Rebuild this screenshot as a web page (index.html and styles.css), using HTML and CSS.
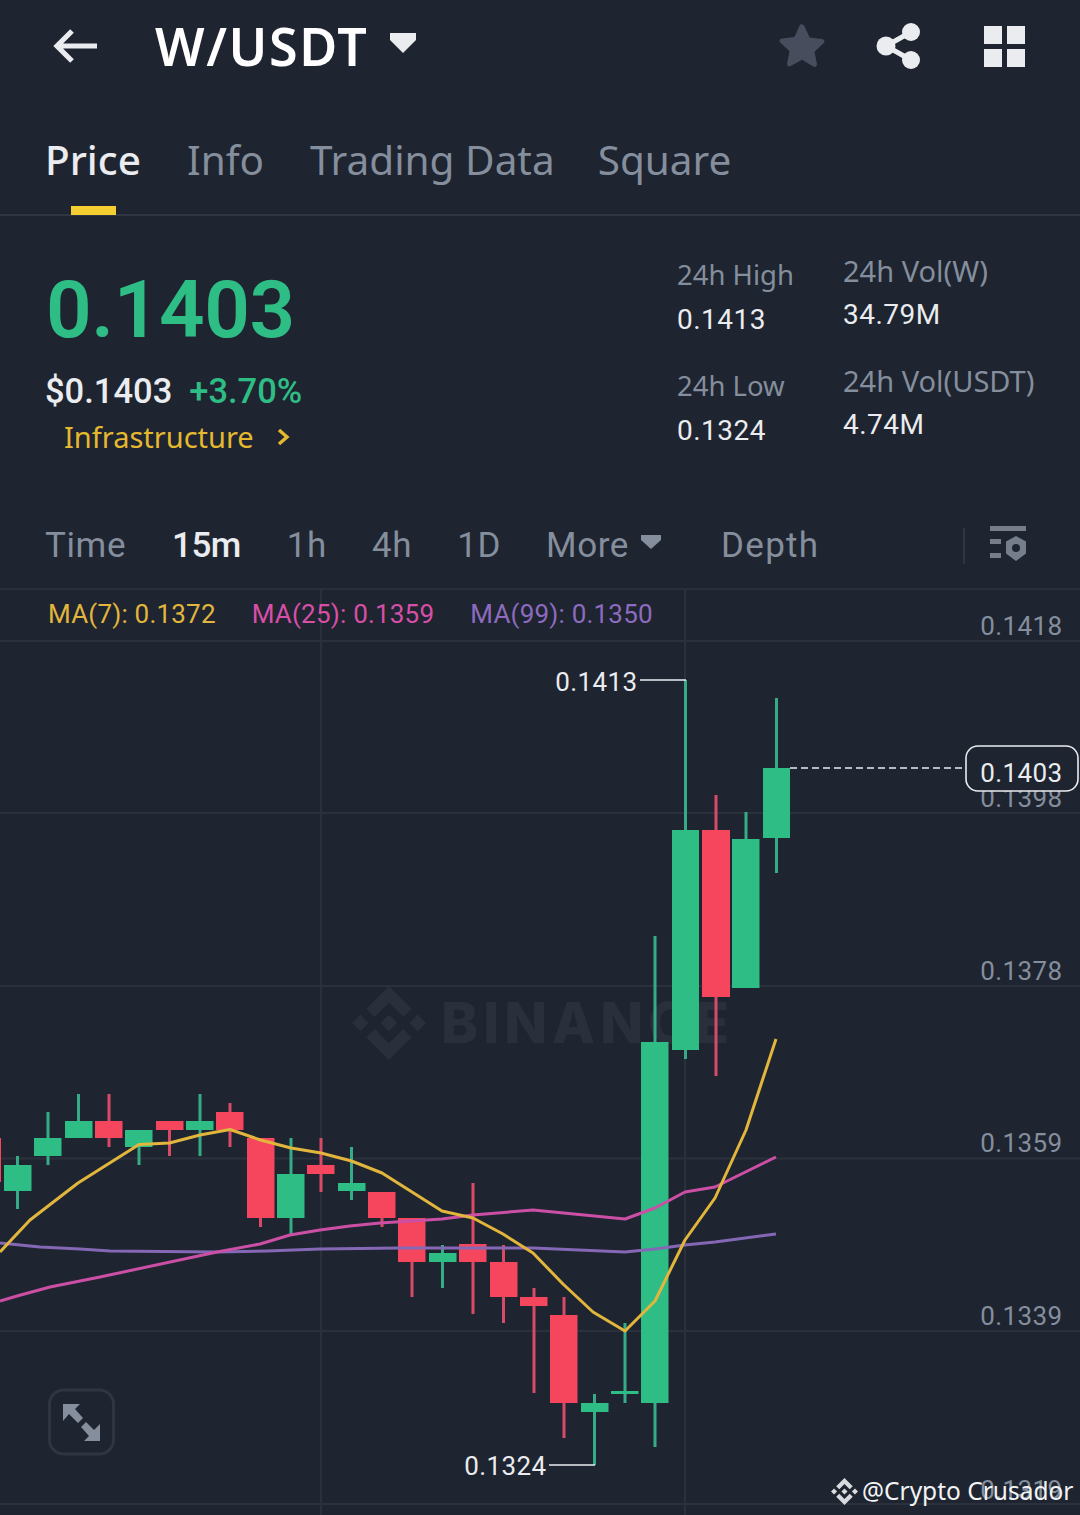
FILE: index.html
```html
<!DOCTYPE html>
<html lang="en">
<head>
<meta charset="utf-8">
<title>W/USDT</title>
<link rel="stylesheet" href="styles.css">
</head>
<body>
<svg class="defs" width="0" height="0"><defs>
<symbol id="bnb" viewBox="0 0 24 24"><path d="M16.624 13.9202l2.7175 2.7154-7.353 7.353-7.353-7.352 2.7175-2.7164 4.6355 4.6595 4.6356-4.6595zm4.6366-4.6366L24 12l-2.7154 2.7164L18.5682 12l2.6924-2.7164zm-9.272.001l2.7163 2.6914-2.7164 2.7174v-.001L9.2721 12l2.7164-2.7154zm-9.2722-.001L5.4088 12l-2.6914 2.6924L0 12l2.7164-2.7164zM11.9885.0115l7.353 7.329-2.7174 2.7154-4.6356-4.6356-4.6355 4.6595-2.7174-2.7154 7.353-7.353z"/></symbol>
</defs></svg>
<main class="app">
  <header class="header">
    <svg class="back" width="46" height="38" viewBox="0 0 46 38"><path d="M45 19H6M20 4L5 19l15 15"/></svg>
    <h1 class="title">W/USDT</h1>
    <svg class="title-caret" width="28" height="22" viewBox="0 0 28 22"><path d="M1 1h26v7L14 21 1 8z"/></svg>
    <div class="header-icons">
      <svg width="48" height="48" viewBox="0 0 48 48"><path class="star" d="M24 2.500c1.200 0 2 .8 2.600 2l5 11 12.300 1.500c2.600.3 3.400 2.600 1.600 4.300l-9 8.500 2.400 12c.5 2.600-1.500 4-3.700 2.800L24 37.700l-11.200 6.400c-2.200 1.200-4.200-.2-3.700-2.800l2.400-12-9-8.500c-1.800-1.700-1-4 1.600-4.300l12.300-1.500 5-11c.6-1.200 1.400-2 2.600-2z"/></svg>
      <svg class="share" width="46" height="48" viewBox="0 0 46 48"><path class="share-line" d="M35 10L10 24l25 14"/><circle cx="35" cy="10" r="9"/><circle cx="10" cy="24" r="9.500"/><circle cx="35" cy="38" r="9"/></svg>
      <div class="apps"><i></i><i></i><i></i><i></i></div>
    </div>
  </header>

  <nav class="tabs">
    <a class="tab active">Price</a>
    <a class="tab">Info</a>
    <a class="tab">Trading Data</a>
    <a class="tab">Square</a>
  </nav>

  <section class="stats">
    <div class="summary">
      <div class="last">0.1403</div>
      <div class="change"><span class="usd">$0.1403</span><span class="pct">+3.70%</span></div>
      <div class="sector">Infrastructure<svg width="14" height="18" viewBox="0 0 14 18"><path d="M3 2l8 7-8 7"/></svg></div>
    </div>
    <div class="figures">
      <div class="fig-col first">
        <div class="fig"><span class="fig-label">24h High</span><span class="fig-value">0.1413</span></div>
        <div class="fig"><span class="fig-label">24h Low</span><span class="fig-value">0.1324</span></div>
      </div>
      <div class="fig-col second">
        <div class="fig"><span class="fig-label">24h Vol(W)</span><span class="fig-value">34.79M</span></div>
        <div class="fig"><span class="fig-label">24h Vol(USDT)</span><span class="fig-value">4.74M</span></div>
      </div>
    </div>
  </section>

  <nav class="timebar">
    <span class="time t-time">Time</span>
    <span class="time t-15 on">15m</span>
    <span class="time t-1h">1h</span>
    <span class="time t-4h">4h</span>
    <span class="time t-1d">1D</span>
    <span class="time t-more">More<svg width="20" height="14" viewBox="0 0 20 14"><path d="M0 0h20v5l-10 9L0 5z"/></svg></span>
    <span class="time t-depth">Depth</span>
    <span class="divider"></span>
    <svg class="settings" width="38" height="38" viewBox="0 0 38 38"><path d="M1 1h36v5H1zM1 14h11v5H1zM1 28h11v5H1z"/><path fill-rule="evenodd" d="M27 11l10 5.500v12L27 36l-10-7.500v-12zM27 19a4 4 0 100 8 4 4 0 000-8z"/></svg>
  </nav>

  <section class="chart">
    <div class="legend">
      <span class="ma7">MA(7): 0.1372</span>
      <span class="ma25">MA(25): 0.1359</span>
      <span class="ma99">MA(99): 0.1350</span>
    </div>
    <svg class="plot" width="1080" height="925" viewBox="0 590 1080 925">
      <g class="grid">
        <path d="M0 641H1080M0 813H1080M0 986H1080M0 1158.500H1080M0 1331H1080M0 1504H1080M321 590V1515M685 590V1515"/>
      </g>
      <g class="watermark">
        <use href="#bnb" x="352" y="986" width="74" height="74"/>
        <text class="wm-text" x="441" y="1043">BINANCE</text>
      </g>
      <g class="axis">
        <text x="1062.500" y="635">0.1418</text>
        <text x="1062.500" y="807">0.1398</text>
        <text x="1062.500" y="980">0.1378</text>
        <text x="1062.500" y="1152">0.1359</text>
        <text x="1062.500" y="1325">0.1339</text>
        <text x="1062.500" y="1499">0.1319</text>
      </g>
      <g class="up">
        <rect class="w" x="16" y="1156" width="3" height="53"/><rect x="4" y="1165" width="27.500" height="26"/>
        <rect class="w" x="46.500" y="1112" width="3" height="53"/><rect x="34" y="1138" width="27.500" height="18"/>
        <rect class="w" x="77" y="1094" width="3" height="44"/><rect x="65" y="1121" width="27.500" height="17"/>
        <rect class="w" x="137.500" y="1130" width="3" height="35"/><rect x="125" y="1130" width="27.500" height="17"/>
        <rect class="w" x="198.500" y="1094" width="3" height="62"/><rect x="186" y="1121" width="27.500" height="9"/>
        <rect class="w" x="289.500" y="1138" width="3" height="97"/><rect x="277" y="1174" width="27.500" height="44"/>
        <rect class="w" x="350" y="1147" width="3" height="53"/><rect x="338" y="1183" width="27.500" height="8"/>
        <rect class="w" x="441" y="1245" width="3" height="43"/><rect x="429" y="1253" width="27.500" height="9"/>
        <rect class="w" x="593" y="1394" width="3" height="71"/><rect x="581" y="1403" width="27.500" height="9"/>
        <rect class="w" x="623.500" y="1323" width="3" height="80"/><rect x="611" y="1391" width="27.500" height="3"/>
        <rect class="w" x="653.500" y="936" width="3" height="511"/><rect x="641" y="1042" width="27.500" height="361"/>
        <rect class="w" x="684" y="680" width="3" height="379"/><rect x="672" y="830" width="27" height="220"/>
        <rect class="w" x="744.500" y="812" width="3" height="176"/><rect x="732" y="839" width="27.500" height="149"/>
        <rect class="w" x="775" y="698" width="3" height="175"/><rect x="763" y="768" width="27" height="70"/>
      </g>
      <g class="down">
        <rect x="-13" y="1138" width="14" height="44"/>
        <rect class="w" x="107.500" y="1094" width="3" height="53"/><rect x="95" y="1121" width="27.500" height="17"/>
        <rect class="w" x="168" y="1121" width="3" height="35"/><rect x="156" y="1121" width="27.500" height="9"/>
        <rect class="w" x="228.500" y="1103" width="3" height="44"/><rect x="216" y="1112" width="27.500" height="18"/>
        <rect class="w" x="259" y="1138" width="3" height="89"/><rect x="247" y="1138" width="27.500" height="80"/>
        <rect class="w" x="319.500" y="1138" width="3" height="54"/><rect x="307" y="1165" width="27.500" height="9"/>
        <rect class="w" x="380.500" y="1192" width="3" height="35"/><rect x="368" y="1192" width="27.500" height="26"/>
        <rect class="w" x="410.500" y="1218" width="3" height="79"/><rect x="398" y="1218" width="27.500" height="44"/>
        <rect class="w" x="471.500" y="1183" width="3" height="131"/><rect x="459" y="1244" width="27.500" height="18"/>
        <rect class="w" x="502" y="1245" width="3" height="78"/><rect x="490" y="1262" width="27.500" height="35"/>
        <rect class="w" x="532.500" y="1288" width="3" height="105"/><rect x="520" y="1297" width="27.500" height="9"/>
        <rect class="w" x="562.500" y="1297" width="3" height="141"/><rect x="550" y="1315" width="27.500" height="88"/>
        <rect class="w" x="714.500" y="795" width="3" height="281"/><rect x="702" y="830" width="28" height="167"/>
      </g>
      <g class="lines">
        <polyline class="l99" points="0,1243 40,1247 80,1249 110,1251 217,1252 267,1251 320,1249 400,1248 533,1248 625,1252 655,1249 685,1245 715,1242 776,1234"/>
        <polyline class="l25" points="0,1301 17,1296 50,1287 100,1277 217,1252 260,1244 290,1235 320,1230 350,1226 380,1223 442,1219 473,1215 533,1210 625,1219 655,1208 685,1192 715,1187 776,1157"/>
        <polyline class="l7" points="0,1252 30,1220 78,1183 139,1144.500 169.500,1143 200,1135 230,1129.500 260.500,1140 291,1148 321,1153 351.500,1161 382,1173 412,1192 442,1211 473,1218 503,1234 533,1253 563,1284 593,1312 625,1331 655,1301 685,1240 715,1198 746,1130 776,1039"/>
      </g>
      <g class="marks">
        <path d="M640 680H686M549 1465H595"/>
        <text x="637.500" y="691">0.1413</text>
        <text x="546.500" y="1475">0.1324</text>
      </g>
      <path class="dash" d="M790 768H966"/>
      <rect class="now-box" x="966" y="746" width="112" height="45" rx="12"/>
      <text class="now-text" x="1062.500" y="782">0.1403</text>
      <rect class="expand-box" x="49.500" y="1390" width="64" height="64" rx="14"/>
      <path class="expand" d="M63 1404H80L75 1409 83 1418 78 1423 69 1414 63 1421zM100 1441H84L89 1436 81 1427 86 1422 94 1430 100 1424z"/>
      <use class="wm-logo" href="#bnb" x="831" y="1478" width="27" height="27"/>
      <text class="handle" x="862" y="1500">@Crypto Crusador</text>
    </svg>
  </section>
</main>
</body>
</html>
```

FILE: styles.css
```css
* { box-sizing: border-box; }
html, body { margin: 0; padding: 0; background: #1e2430; }
body { width: 1080px; height: 1515px; overflow: hidden; font-family: "Noto Sans", sans-serif; color: #eaecef; }
.defs { position: absolute; }
.app { width: 1080px; height: 1515px; display: flex; flex-direction: column; }

.header { height: 92px; padding: 0 55px 0 52px; display: flex; align-items: center; }
.back { fill: none; stroke: #eaecef; stroke-width: 5.2; }
.title { margin: 0 0 0 57px; font: 600 52px/60px "Noto Sans", sans-serif; color: #fff; letter-spacing: 1.6px; }
.title-caret { margin: -6px 0 0 21px; fill: #eaecef; }
.header-icons { margin-left: auto; display: flex; align-items: center; }
.star { fill: #474d5c; }
.share { fill: #eaecef; margin-left: 50px; }
.share-line { fill: none; stroke: #eaecef; stroke-width: 5; }
.apps { margin-left: 62px; display: grid; grid-template-columns: 18px 18px; grid-auto-rows: 18px; gap: 5px; }
.apps i { background: #eaecef; }

.tabs { height: 124px; padding: 40px 0 0 45px; display: flex; gap: 46px; border-bottom: 2px solid #2f3640; }
.tab { position: relative; font-size: 40.5px; line-height: 56px; color: #848e9c; }
.tab:last-child { margin-left: -3px; }
.tab.active { color: #eaecef; font-weight: 500; }
.tab.active::after { content: ""; position: absolute; left: 26px; width: 45px; top: 74px; height: 9px; background: #f5ce32; }

.stats { height: 284px; display: flex; justify-content: space-between; }
.summary { padding: 54px 0 0 46px; }
.last { font: 600 80px/80px Roboto, sans-serif; color: #2ebd85; letter-spacing: -.4px; }
.change { margin: 21px 0 0 -1px; display: flex; gap: 17px; font: 500 34.500px/40px Roboto, sans-serif; }
.pct { color: #2ebd85; }
.sector { margin: 8px 0 0 18px; display: flex; align-items: center; gap: 22px; font-size: 29px; line-height: 36px; color: #e5b92f; }
.sector svg { fill: none; stroke: #e5b92f; stroke-width: 3.4; }
.figures { width: 403px; display: flex; }
.fig-col { display: flex; flex-direction: column; }
.fig-col.first { width: 166px; padding-top: 41px; gap: 30px; }
.fig-col.second { padding-top: 37px; gap: 30px; }
.fig { display: flex; flex-direction: column; }
.first .fig { gap: 9px; }
.second .fig { gap: 8px; }
.fig-label { line-height: 36px; color: #848e9c; white-space: nowrap; }
.first .fig-label { font-size: 27.500px; }
.second .fig-label { font-size: 29px; }
.fig-value { font: 400 28px/36px Roboto, sans-serif; color: #eaecef; letter-spacing: .5px; }

.timebar { height: 90px; padding: 4px 0 0 45px; display: flex; align-items: center; border-bottom: 2px solid #2a303b; font: 400 35px/44px Roboto, sans-serif; color: #848e9c; }
.time { white-space: nowrap; letter-spacing: .6px; }
.time.on { color: #eaecef; font-weight: 500; letter-spacing: -.5px; }
.t-15 { margin-left: 46px; }
.t-1h { margin-left: 46px; }
.t-4h { margin-left: 45px; }
.t-1d { margin-left: 45px; }
.t-more { margin-left: 45px; display: flex; align-items: center; gap: 12px; }
.t-more svg { fill: #848e9c; margin-top: -8px; }
.t-depth { margin-left: 60px; letter-spacing: 1.300px; }
.divider { margin-left: 144px; width: 2px; height: 36px; background: #2f3640; }
.settings { margin: -4px 0 0 24px; fill: #767e8c; }

.chart { position: relative; height: 925px; }
.legend { position: absolute; left: 48px; top: 6px; display: flex; gap: 36px; font: 400 26px/36px Roboto, sans-serif; letter-spacing: .2px; }
.ma7 { color: #e2b63c; }
.ma25 { color: #d84fa7; }
.ma99 { color: #8d6bbf; }
.plot { display: block; }
.grid path { fill: none; stroke: #2b313c; stroke-width: 2; }
.watermark { fill: #2a303b; }
.wm-text { font: 800 56px Inter, sans-serif; letter-spacing: 5px; }
.axis text { font: 400 26px Roboto, sans-serif; fill: #848e9c; text-anchor: end; letter-spacing: .4px; }
.up { fill: #2ebd85; }
.down { fill: #f6465d; }
.up .w { fill: #35ac85; }
.down .w { fill: #d84a66; }
.lines polyline { fill: none; stroke-width: 3; stroke-linejoin: round; }
.l7 { stroke: #e2b63c; }
.l25 { stroke: #cc4fa6; }
.l99 { stroke: #8568b5; }
.marks path { fill: none; stroke: #eaecef; stroke-width: 1.600; }
.marks text, .now-text { font: 400 26px Roboto, sans-serif; fill: #eaecef; letter-spacing: .4px; text-anchor: end; }
.dash { fill: none; stroke: #eaecef; stroke-width: 1.600; stroke-dasharray: 7 4; }
.now-box { fill: #1e2430; stroke: #eaecef; stroke-width: 1.600; }
.expand-box { fill: none; stroke: #2f3640; stroke-width: 3; }
.expand { fill: #848e9c; }
.wm-logo { fill: #d8dade; }
.handle { font: 400 24.500px "Noto Sans", sans-serif; fill: #f2f3f5; }
```
